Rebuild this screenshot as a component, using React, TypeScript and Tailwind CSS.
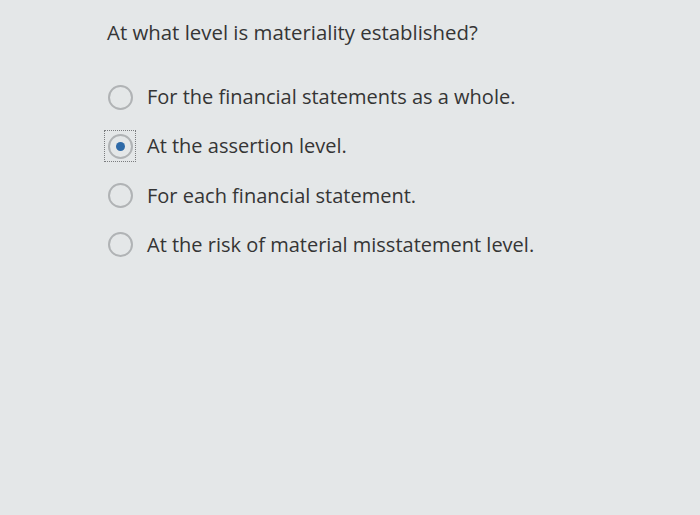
import { useState } from 'react';

const options = [
  'For the financial statements as a whole.',
  'At the assertion level.',
  'For each financial statement.',
  'At the risk of material misstatement level.',
];

function Radio({ checked, focused }: { checked: boolean; focused: boolean }) {
  return (
    <span
      className={`flex h-[32px] w-[32px] shrink-0 items-center justify-center ${
        focused ? 'border border-dotted border-[#7a7c7e]' : 'border border-transparent'
      }`}
    >
      <span className="flex h-[25px] w-[25px] items-center justify-center rounded-full border-[2px] border-[#b0b3b5]">
        {checked && <span className="h-[9px] w-[9px] rounded-full bg-[#2e6aa8]" />}
      </span>
    </span>
  );
}

export default function App() {
  const [selected, setSelected] = useState(1);

  return (
    <div className="h-[515px] w-[700px] bg-[#e4e7e8] pl-[104px] pt-[17px] text-[#353535] [font-family:'Open_Sans',sans-serif]">
      <h1 className="pl-[3px] text-[20.4px] leading-[30px]">At what level is materiality established?</h1>

      <div className="mt-[34px] flex flex-col gap-[17.3px]">
        {options.map((text, i) => (
          <label key={text} className="flex cursor-pointer items-center gap-[11px]" onClick={() => setSelected(i)}>
            <Radio checked={selected === i} focused={i === 1} />
            <span className="text-[20px] leading-[32px]">{text}</span>
          </label>
        ))}
      </div>
    </div>
  );
}
